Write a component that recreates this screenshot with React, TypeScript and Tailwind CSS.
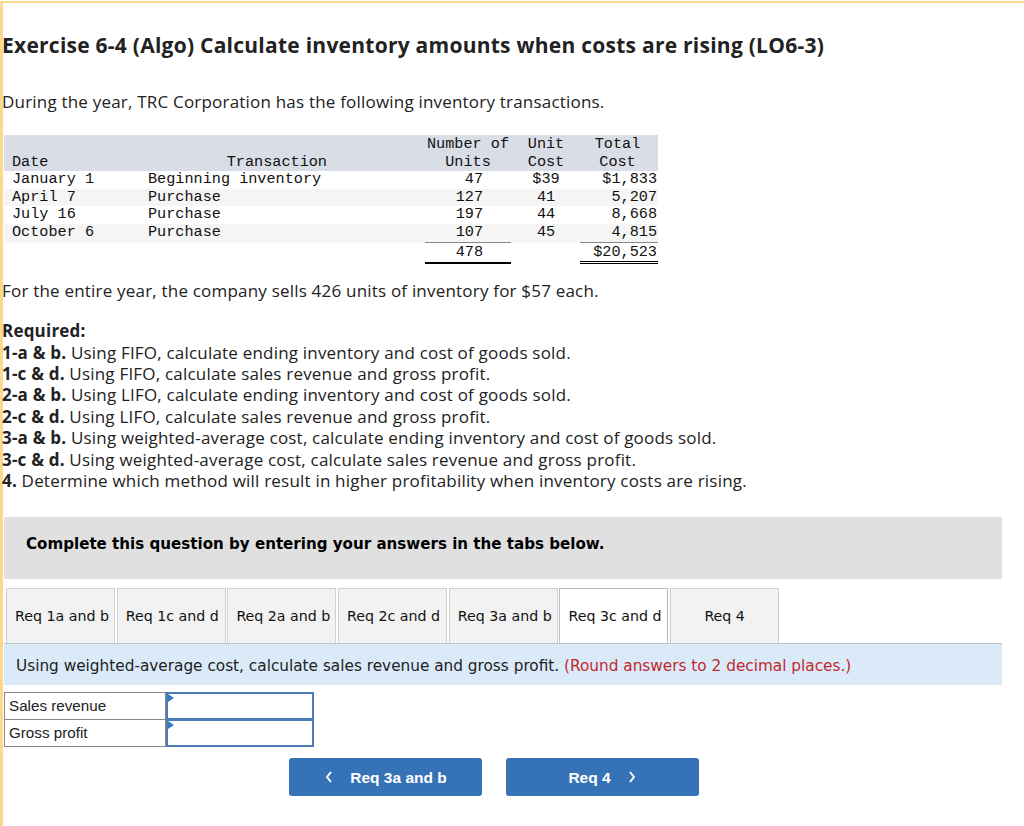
import React from 'react'

const sans = { fontFamily: '"Open Sans", Lato, sans-serif' }
const verdana = { fontFamily: '"DejaVu Sans", Verdana, sans-serif' }
const mono = { fontFamily: '"Liberation Mono", "Courier New", monospace' }
const arial = { fontFamily: '"Liberation Sans", Arial, sans-serif' }

const rows = [
  { date: 'January 1', tx: 'Beginning inventory', units: '47', cost: '$39', total: '$1,833' },
  { date: 'April 7', tx: 'Purchase', units: '127', cost: '41', total: '5,207' },
  { date: 'July 16', tx: 'Purchase', units: '197', cost: '44', total: '8,668' },
  { date: 'October 6', tx: 'Purchase', units: '107', cost: '45', total: '4,815' },
]

const reqs: [string, string][] = [
  ['1-a & b.', 'Using FIFO, calculate ending inventory and cost of goods sold.'],
  ['1-c & d.', 'Using FIFO, calculate sales revenue and gross profit.'],
  ['2-a & b.', 'Using LIFO, calculate ending inventory and cost of goods sold.'],
  ['2-c & d.', 'Using LIFO, calculate sales revenue and gross profit.'],
  ['3-a & b.', 'Using weighted-average cost, calculate ending inventory and cost of goods sold.'],
  ['3-c & d.', 'Using weighted-average cost, calculate sales revenue and gross profit.'],
  ['4.', 'Determine which method will result in higher profitability when inventory costs are rising.'],
]

const tabs = ['Req 1a and b', 'Req 1c and d', 'Req 2a and b', 'Req 2c and d', 'Req 3a and b', 'Req 3c and d', 'Req 4']

const InputRow = ({ label }: { label: string }) => (
  <div className="flex h-[27px]">
    <div className="w-[162px] border border-[#8a8a8a] -mb-px px-[4px] text-[15.2px] text-[#222] flex items-center" style={arial}>
      {label}
    </div>
    <div className="relative w-[148px] border-2 border-[#4d7bb5] bg-white -mb-px">
      <div className="absolute left-0 top-0 w-0 h-0 border-y-[4px] border-y-transparent border-l-[6px] border-l-[#3a78c0]" />
    </div>
  </div>
)

const App = () => {
  return (
    <div className="min-h-[826px] bg-white pt-px">
      <div className="min-h-[825px] border-t-2 border-l-[3px] border-[#fdd98c] pr-[22px] text-[#222]" style={sans}>
        <h1 className="pt-[28px] text-[21px] leading-[28px] font-bold tracking-[0.25px] -ml-px">
          Exercise 6-4 (Algo) Calculate inventory amounts when costs are rising (LO6-3)
        </h1>

        <p className="mt-[31px] text-[17px] leading-[24px] tracking-[0.2px] -ml-px">
          During the year, TRC Corporation has the following inventory transactions.
        </p>

        <table className="mt-[21px] ml-px text-[15.2px] leading-[17.6px] text-[#111] border-collapse" style={mono}>
          <thead>
            <tr className="bg-[#d9dde6]">
              <th className="w-[136px] pl-[8px] pt-[18px] pb-0 font-normal text-left align-bottom">Date</th>
              <th className="w-[195px] pr-[8px] pb-0 font-normal text-right align-bottom">Transaction</th>
              <th className="w-[86px]" />
              <th className="w-[94px] pt-px pb-0 font-normal text-center">Number of<br />Units</th>
              <th className="w-[62px] pt-px pb-0 font-normal text-center">Unit<br />Cost</th>
              <th className="w-[81px] pt-px pb-0 font-normal text-center">Total<br />Cost</th>
            </tr>
          </thead>
          <tbody>
            {rows.map((r, i) => (
              <tr key={r.date} className={i % 2 === 1 ? 'bg-[#f5f5f5]' : 'bg-white'}>
                <td className="pl-[8px]">{r.date}</td>
                <td className="pl-[8px] whitespace-pre">{r.tx}</td>
                <td />
                <td className="px-[4px]">
                  <div className={`text-right pr-[28px] ${i === 3 ? 'border-b border-[#888]' : ''}`}>{r.units}</div>
                </td>
                <td className="text-center">{r.cost}</td>
                <td className="pl-[3px]">
                  <div className={`text-right pr-[1px] ${i === 3 ? 'border-b border-[#888]' : ''}`}>{r.total}</div>
                </td>
              </tr>
            ))}
            <tr className="bg-white">
              <td />
              <td />
              <td />
              <td className="px-[4px]">
                <div className="text-right pr-[28px] pt-px border-b-2 border-black">478</div>
              </td>
              <td />
              <td className="pl-[3px]">
                <div className="text-right pr-[1px] pt-px border-b-[3px] border-double border-black">$20,523</div>
              </td>
            </tr>
          </tbody>
        </table>

        <p className="mt-[15px] text-[17px] leading-[24px] tracking-[0.2px] -ml-px">
          For the entire year, the company sells 426 units of inventory for $57 each.
        </p>

        <div className="mt-[17px] text-[17px] leading-[21.4px] tracking-[0.2px] -ml-px">
          <div className="font-bold">Required:</div>
          {reqs.map(([a, b]) => (
            <div key={a}>
              <span className="font-bold">{a}</span> {b}
            </div>
          ))}
        </div>

        <div className="mt-[26px] ml-[1px] h-[62px] bg-[#e0e0e0] pl-[22px] pt-[18px] leading-[18px] text-[15.1px] font-bold text-black" style={verdana}>
          Complete this question by entering your answers in the tabs below.
        </div>

        <div className="mt-[9px] ml-[3px] flex gap-[1.7px] items-end" style={verdana}>
          {tabs.map((t, i) => (
            <div
              key={t}
              className={`w-[109px] h-[55px] flex items-center border border-b-0 text-[14.2px] text-[#111] ${
                i === 5 ? 'bg-white border-[#bbb]' : 'bg-[#f2f2f2] border-[#d0d0d0]'
              } ${i === 6 ? 'justify-center' : 'pl-[8px]'}`}
            >
              {t}
            </div>
          ))}
        </div>
        <div className="ml-[1px] h-[42px] bg-[#dbeaf8] border-t border-[#bcc5cf] flex items-center pl-[12px] pt-[3px] text-[15.3px] text-[#222]" style={verdana}>
          Using weighted-average cost, calculate sales revenue and gross profit.&nbsp;
          <span className="text-[#c0282d]">(Round answers to 2 decimal places.)</span>
        </div>

        <div className="mt-[7px] ml-[1px] flex flex-col">
          <InputRow label="Sales revenue" />
          <InputRow label="Gross profit" />
        </div>

        <div className="mt-[12px] ml-[286px] flex gap-[24px] text-[15.5px] font-bold text-white" style={arial}>
          <button className="w-[193px] h-[38px] rounded-[3px] bg-[#3673b6] flex items-center justify-center gap-[16px]">
            <svg width="10" height="14" viewBox="0 0 10 14" fill="none" stroke="white" strokeWidth="2"><path d="M7 2 L3 7 L7 12" /></svg>
            Req 3a and b
          </button>
          <button className="w-[193px] h-[38px] rounded-[3px] bg-[#3673b6] flex items-center justify-center gap-[16px]">
            Req 4
            <svg width="10" height="14" viewBox="0 0 10 14" fill="none" stroke="white" strokeWidth="2"><path d="M3 2 L7 7 L3 12" /></svg>
          </button>
        </div>
      </div>
    </div>
  )
}

export default App
